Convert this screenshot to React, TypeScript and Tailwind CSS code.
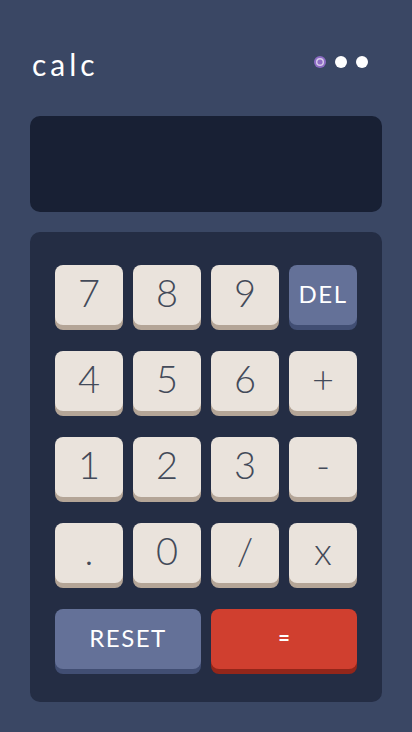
import React from "react";

const Key = ({ label, kind = "num", wide = false }: { label: string; kind?: "num" | "blue" | "red"; wide?: boolean }) => {
  if (kind === "blue") {
    return (
      <button className={`h-[60px] rounded-lg bg-[#647198] shadow-[0_5px_0_#414e73] text-white text-[24px] font-normal tracking-[1.5px] flex items-center justify-center pb-[2px] ${wide ? "col-span-2" : ""}`}>
        {label}
      </button>
    );
  }
  if (kind === "red") {
    return (
      <button className={`h-[60px] rounded-lg bg-[#d03f2f] shadow-[0_5px_0_#93261a] text-white text-[20px] font-bold flex items-center justify-center pb-[4px] ${wide ? "col-span-2" : ""}`}>
        {label}
      </button>
    );
  }
  return (
    <button className="h-[60px] rounded-lg bg-[#eae3dc] shadow-[0_5px_0_#b4a597] text-[#434a59] text-[38px] font-light flex items-center justify-center pb-[6px]">
      {label}
    </button>
  );
};

export default function App() {
  return (
    <div className="w-[412px] h-[732px] bg-[#3a4764] px-[30px] pt-[44px]" style={{ fontFamily: "Lato, 'Noto Sans', sans-serif" }}>
      <div className="flex items-center justify-between h-[36px]">
        <span className="text-white text-[30px] font-normal pl-[2px] pt-[3px] leading-none tracking-[4px]">calc</span>
        <div className="flex items-center gap-[9px] pr-[14px]">
          <svg width="12" height="12" viewBox="0 0 12 12">
            <circle cx="6" cy="6" r="6" fill="#8d6cc4" />
            <circle cx="6" cy="6" r="4" fill="#d8cdeb" />
            <circle cx="6" cy="6" r="2.6" fill="#8d6cc4" />
          </svg>
          <span className="w-[12px] h-[12px] rounded-full bg-white" />
          <span className="w-[12px] h-[12px] rounded-full bg-white" />
        </div>
      </div>
      <div className="mt-[36px] h-[96px] rounded-[10px] bg-[#182034]" />
      <div className="mt-[20px] rounded-[10px] bg-[#242d44] px-[25px] pt-[33px] pb-[33px]">
        <div className="grid grid-cols-4 gap-x-[10px] gap-y-[26px]">
          <Key label="7" />
          <Key label="8" />
          <Key label="9" />
          <Key label="DEL" kind="blue" />
          <Key label="4" />
          <Key label="5" />
          <Key label="6" />
          <Key label="+" />
          <Key label="1" />
          <Key label="2" />
          <Key label="3" />
          <Key label="-" />
          <Key label="." />
          <Key label="0" />
          <Key label="/" />
          <Key label="x" />
          <Key label="RESET" kind="blue" wide />
          <Key label="=" kind="red" wide />
        </div>
      </div>
    </div>
  );
}
